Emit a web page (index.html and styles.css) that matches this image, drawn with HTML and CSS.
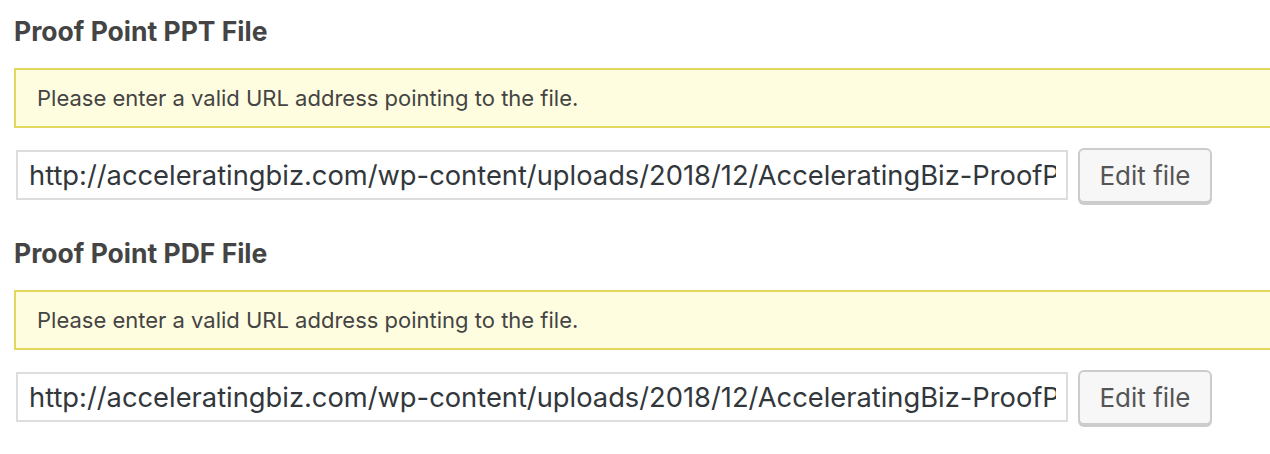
FILE: index.html
```html
<!DOCTYPE html>
<html>
<head>
<meta charset="utf-8">
<link rel="stylesheet" href="styles.css">
</head>
<body>
  <div class="field">
    <h3 class="label">Proof Point PPT File</h3>
    <div class="notice">Please enter a valid URL address pointing to the file.</div>
    <div class="row">
      <input class="url" type="text" value="http://acceleratingbiz.com/wp-content/uploads/2018/12/AcceleratingBiz-ProofPoint.pptx">
      <button class="btn" type="button">Edit file</button>
    </div>
  </div>
  <div class="field">
    <h3 class="label">Proof Point PDF File</h3>
    <div class="notice">Please enter a valid URL address pointing to the file.</div>
    <div class="row">
      <input class="url" type="text" value="http://acceleratingbiz.com/wp-content/uploads/2018/12/AcceleratingBiz-ProofPoint.pdf">
      <button class="btn" type="button">Edit file</button>
    </div>
  </div>
</body>
</html>
```

FILE: styles.css
```css
html, body {
  margin: 0;
  padding: 0;
  background: #ffffff;
}
body {
  padding: 16px 0 0 14px;
  font-family: Inter, "Liberation Sans", Arial, sans-serif;
}
.field {
  margin-bottom: 35px;
}
.label {
  margin: 0 0 21px 0;
  font-size: 26.5px;
  line-height: 31px;
  font-weight: bold;
  color: #444444;
}
.notice {
  box-sizing: border-box;
  height: 60px;
  border: 2px solid #e3d75e;
  border-right: none;
  background: #fffde0;
  color: #444444;
  font-size: 22px;
  line-height: 56px;
  padding-left: 21px;
}
.row {
  display: flex;
  align-items: flex-start;
  gap: 10px;
  margin-top: 20px;
  padding-left: 2px;
}
.url {
  box-sizing: border-box;
  width: 1052px;
  height: 50px;
  margin: 2px 0 0 0;
  border: 2px solid #dddddd;
  border-radius: 0;
  background: #ffffff;
  padding: 0 10px 0 11px;
  font-family: Inter, "Liberation Sans", Arial, sans-serif;
  font-size: 27.3px;
  color: #32373c;
  outline: none;
}
.btn {
  box-sizing: border-box;
  width: 134px;
  height: 55px;
  margin: 0;
  padding: 0;
  border: 2px solid #cccccc;
  border-radius: 6px;
  background: #f7f7f7;
  box-shadow: 0 2px 0 #cccccc;
  font-family: Inter, "Liberation Sans", Arial, sans-serif;
  font-size: 26px;
  color: #555555;
}
```
